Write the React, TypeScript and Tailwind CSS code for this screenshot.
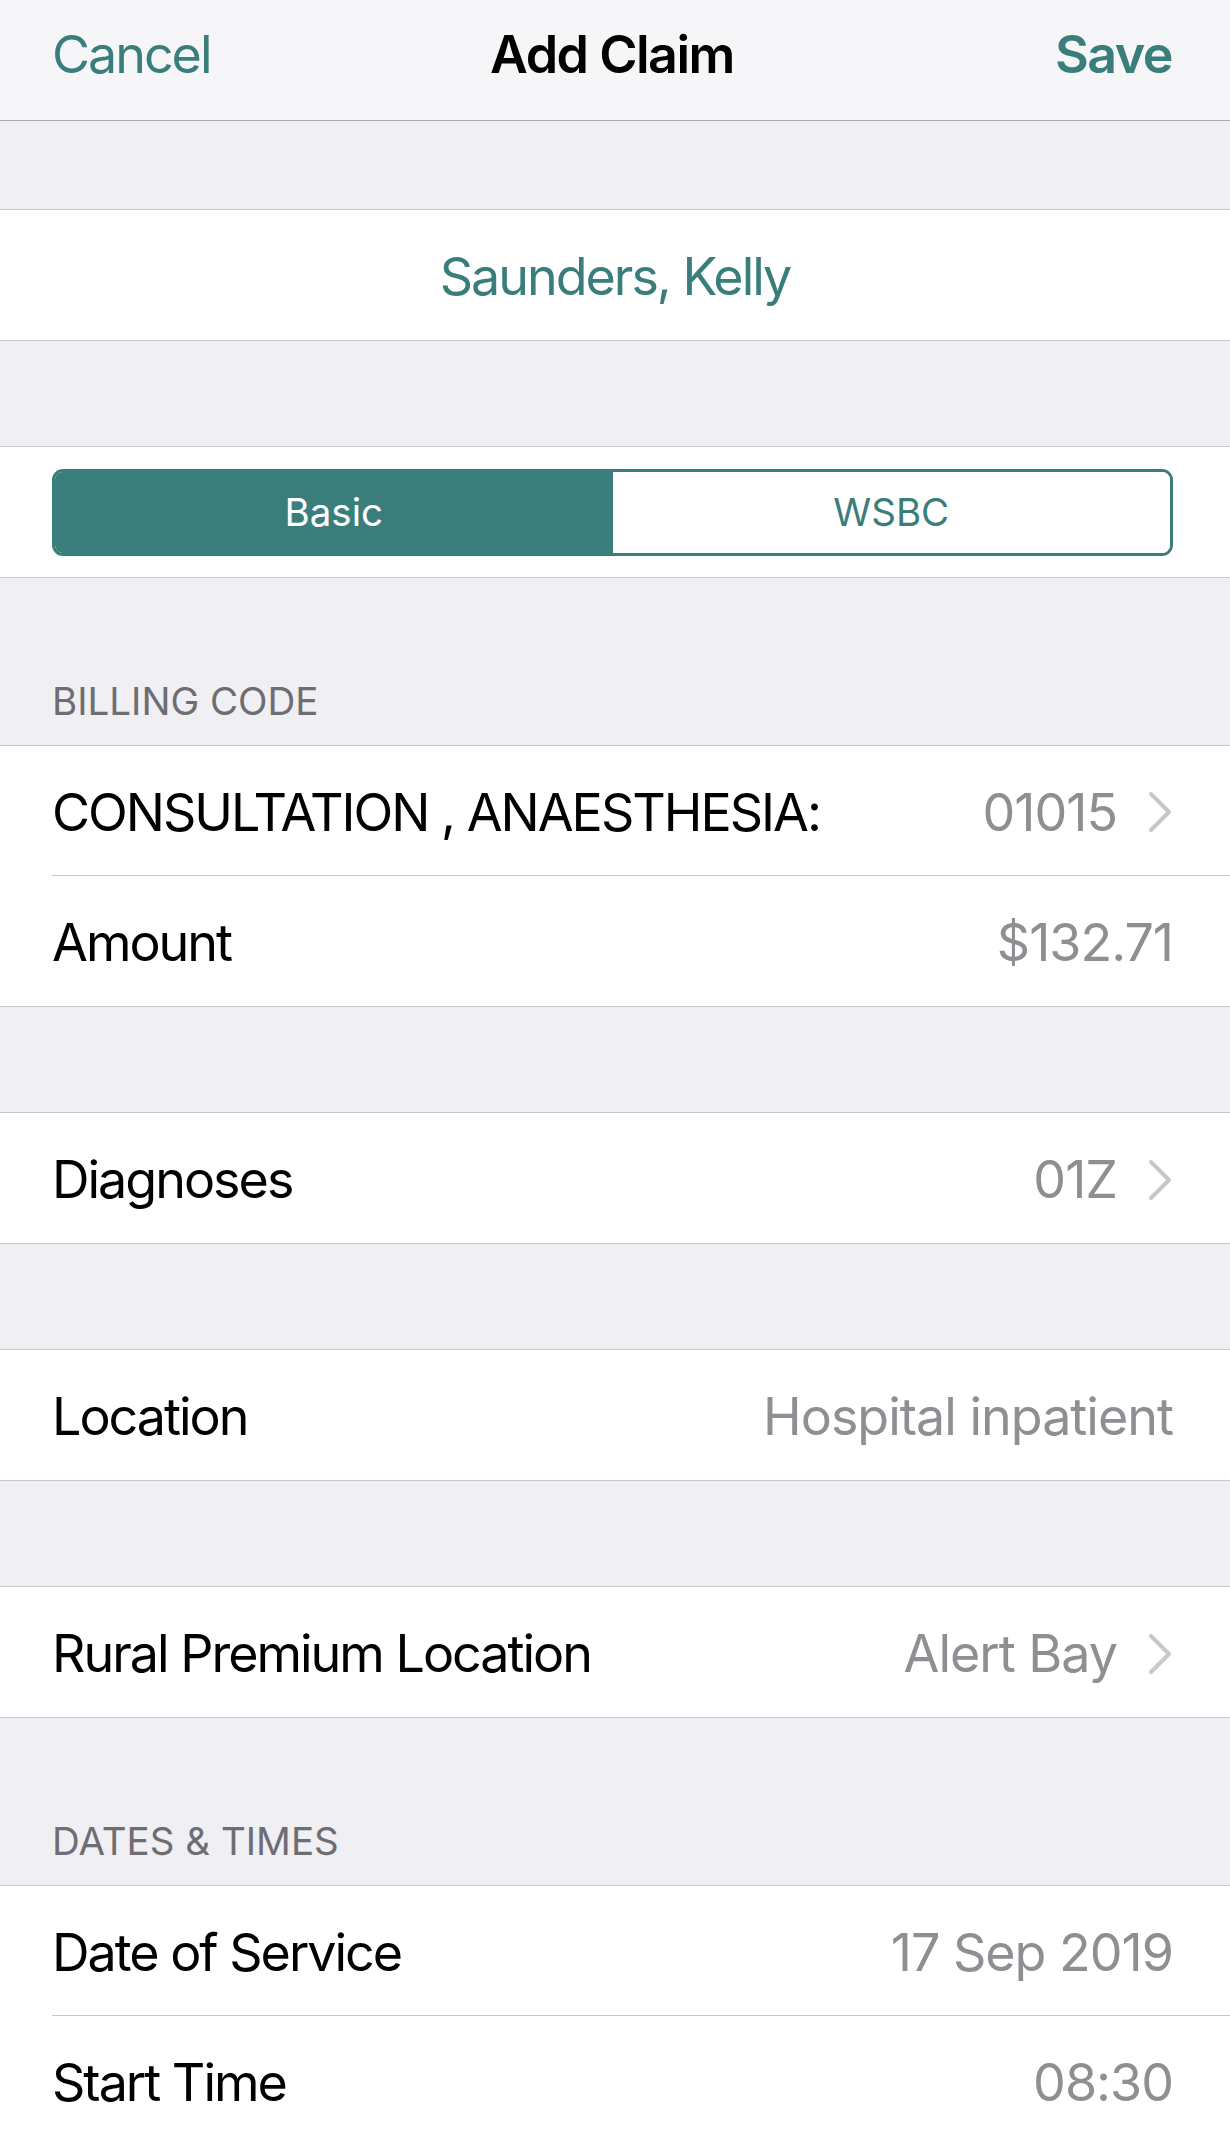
import React from "react";

const Chevron = () => (
  <svg width="26" height="42" viewBox="0 0 26 42" className="ml-[30px] shrink-0">
    <polyline points="4,3 22,21 4,39" fill="none" stroke="#c7c7cc" strokeWidth="4" strokeLinecap="round" strokeLinejoin="round" />
  </svg>
);

const Row = ({ label, value, chevron, last }: { label: string; value: string; chevron?: boolean; last?: boolean }) => (
  <div className="pl-[52px]">
    <div className={`flex h-[130px] items-center pr-[57px] pt-[3px] ${last ? "" : "border-b border-[#c8c7cc]"}`}>
      <span className="min-w-0 flex-1 whitespace-nowrap text-[52px] leading-tight tracking-[-2px] text-black">{label}</span>
      <span className="whitespace-nowrap text-[52px] leading-tight tracking-[-1px] text-[#8e8e93]">{value}</span>
      {chevron && <Chevron />}
    </div>
  </div>
);

const Section = ({ children }: { children: React.ReactNode }) => (
  <div className="border-y border-[#c8c7cc] bg-white">{children}</div>
);

const Header = ({ text }: { text: string }) => (
  <div className="flex h-[167px] items-end pb-[25px] pl-[52px] text-[38.5px] leading-none text-[#6d6d72]">{text}</div>
);

export default function App() {
  return (
    <div className="min-h-[2137px] w-[1230px] overflow-hidden bg-[#efeff4] font-['Inter',sans-serif]">
      <div className="grid h-[121px] grid-cols-3 items-center border-b border-[#a9a9ad] bg-[#f6f6f8] pl-[52px] pr-[58px] pb-[11px]">
        <span className="justify-self-start text-[52px] leading-tight tracking-[-2px] text-[#3a7e7c]">Cancel</span>
        <span className="justify-self-center whitespace-nowrap text-[52px] font-semibold leading-tight tracking-[-1.5px] text-black">Add Claim</span>
        <span className="justify-self-end text-[52px] font-semibold leading-tight tracking-[-1.5px] text-[#3a7e7c]">Save</span>
      </div>
      <div className="h-[88px]" />
      <Section>
        <div className="flex h-[130px] items-center justify-center pt-[3px] text-[52px] leading-tight tracking-[-2px] text-[#3a7e7c]">Saunders, Kelly</div>
      </Section>
      <div className="h-[105px]" />
      <Section>
        <div className="flex h-[130px] items-center pl-[52px] pr-[57px]">
          <div className="flex h-[87px] w-full overflow-hidden rounded-[11px] border-[3px] border-[#3a7e7c]">
            <div className="flex flex-1 items-center justify-center bg-[#3a7e7c] text-[38.5px] leading-none text-white">Basic</div>
            <div className="flex flex-1 items-center justify-center bg-white text-[38.5px] leading-none text-[#3a7e7c]">WSBC</div>
          </div>
        </div>
      </Section>
      <Header text="BILLING CODE" />
      <Section>
        <Row label="CONSULTATION , ANAESTHESIA:" value="01015" chevron />
        <Row label="Amount" value="$132.71" last />
      </Section>
      <div className="h-[105px]" />
      <Section>
        <Row label="Diagnoses" value="01Z" chevron last />
      </Section>
      <div className="h-[105px]" />
      <Section>
        <Row label="Location" value="Hospital inpatient" last />
      </Section>
      <div className="h-[105px]" />
      <Section>
        <Row label="Rural Premium Location" value="Alert Bay" chevron last />
      </Section>
      <Header text="DATES & TIMES" />
      <Section>
        <Row label="Date of Service" value="17 Sep 2019" />
        <Row label="Start Time" value="08:30" last />
      </Section>
    </div>
  );
}
